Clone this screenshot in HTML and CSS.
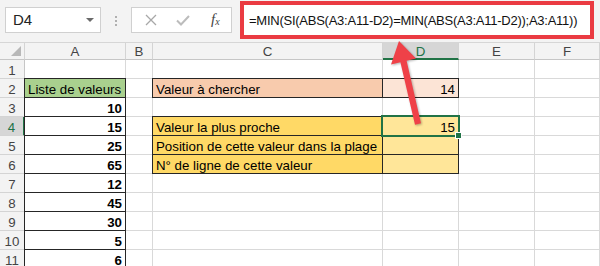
FILE: index.html
```html
<!DOCTYPE html>
<html lang="fr">
<head>
    <meta charset="UTF-8">
    <title>Valeur la plus proche</title>
    <link rel="stylesheet" href="styles.css">
</head>
<body>
    <div class="toolbar">
        <div class="namebox">
            <span>D4</span>
            <span class="caret"></span>
        </div>
        <div class="grip">
            <svg width="4" height="12" viewBox="0 0 4 12"><circle cx="2" cy="2" r="1" fill="#9a9a9a"/><circle cx="2" cy="6" r="1" fill="#9a9a9a"/><circle cx="2" cy="10" r="1" fill="#9a9a9a"/></svg>
        </div>
        <div class="btns">
            <svg class="icon" width="12" height="12" viewBox="0 0 12 12"><path d="M1 1 L11 11 M11 1 L1 11" stroke="#a8a8a8" stroke-width="1.3" fill="none"/></svg>
            <svg class="icon" width="14" height="12" viewBox="0 0 14 12"><path d="M1 6.5 L5 10.5 L13 2" stroke="#bcbcbc" stroke-width="2" fill="none"/></svg>
            <span class="fx">f<sub>x</sub></span>
        </div>
        <div class="formula">=MIN(SI(ABS(A3:A11-D2)=MIN(ABS(A3:A11-D2));A3:A11))</div>
    </div>

    <div class="sheet">
        <div class="hd corner"><span class="tri"></span></div>
        <div class="hd">A</div>
        <div class="hd">B</div>
        <div class="hd">C</div>
        <div class="hd active">D</div>
        <div class="hd">E</div>
        <div class="hd">F</div>

        <div class="rh">1</div>
        <div class="c"></div><div class="c"></div><div class="c"></div><div class="c"></div><div class="c"></div><div class="c"></div>

        <div class="rh">2</div>
        <div class="c box green">Liste de valeurs</div>
        <div class="c"></div>
        <div class="c box peach">Valeur à chercher</div>
        <div class="c box peach-light r">14</div>
        <div class="c"></div><div class="c"></div>

        <div class="rh">3</div>
        <div class="c box num">10</div>
        <div class="c"></div><div class="c"></div><div class="c"></div><div class="c"></div><div class="c"></div>

        <div class="rh active">4</div>
        <div class="c box num">15</div>
        <div class="c"></div>
        <div class="c box gold">Valeur la plus proche</div>
        <div class="c box gold-light r sel">15</div>
        <div class="c"></div><div class="c"></div>

        <div class="rh">5</div>
        <div class="c box num">25</div>
        <div class="c"></div>
        <div class="c box gold">Position de cette valeur dans la plage</div>
        <div class="c box gold-light"></div>
        <div class="c"></div><div class="c"></div>

        <div class="rh">6</div>
        <div class="c box num">65</div>
        <div class="c"></div>
        <div class="c box gold">N° de ligne de cette valeur</div>
        <div class="c box gold-light"></div>
        <div class="c"></div><div class="c"></div>

        <div class="rh">7</div>
        <div class="c box num">12</div>
        <div class="c"></div><div class="c"></div><div class="c"></div><div class="c"></div><div class="c"></div>

        <div class="rh">8</div>
        <div class="c box num">45</div>
        <div class="c"></div><div class="c"></div><div class="c"></div><div class="c"></div><div class="c"></div>

        <div class="rh">9</div>
        <div class="c box num">30</div>
        <div class="c"></div><div class="c"></div><div class="c"></div><div class="c"></div><div class="c"></div>

        <div class="rh">10</div>
        <div class="c box num">5</div>
        <div class="c"></div><div class="c"></div><div class="c"></div><div class="c"></div><div class="c"></div>

        <div class="rh">11</div>
        <div class="c box num">6</div>
        <div class="c"></div><div class="c"></div><div class="c"></div><div class="c"></div><div class="c"></div>
    </div>

    <!-- callout arrow pointing at the formula -->
    <svg class="arrow" width="600" height="266" viewBox="0 0 600 266">
        <polygon points="399,41 416,58.6 406.6,60.8 421,123.3 415,124.7 400.4,62.2 391,64.4" fill="#ef4148"/>
    </svg>
</body>
</html>
```

FILE: styles.css
```css
body {
    margin: 0;
    font-family: 'Liberation Sans', Arial, sans-serif;
    font-size: 13.3px;
    color: #000;
    background-color: #fff;
    overflow: hidden;
    position: relative;
}

.toolbar {
    display: flex;
    align-items: center;
    height: 43px;
    padding-bottom: 3px;
    box-sizing: border-box;
    background-color: #f3f3f3;
    border-bottom: 1px solid #d6d6d6;
}

.namebox {
    display: flex;
    align-items: center;
    justify-content: space-between;
    width: 96px;
    height: 26px;
    margin-left: 5px;
    padding: 0 6px 0 7px;
    box-sizing: border-box;
    background-color: #fff;
    border: 1px solid #d0d0d0;
    font-size: 15px;
    color: #222;
}

.caret {
    width: 0;
    height: 0;
    border-left: 4px solid transparent;
    border-right: 4px solid transparent;
    border-top: 4px solid #6a6a6a;
}

.grip {
    width: 30px;
    display: flex;
    justify-content: center;
    padding-top: 2px;
}

.btns {
    display: flex;
    align-items: center;
    width: 101px;
    height: 26px;
    box-sizing: border-box;
    background-color: #fff;
    border: 1px solid #d0d0d0;
    padding-left: 13px;
}

.btns .icon {
    margin-right: 19px;
}

.btns .icon + .icon {
    margin-right: 21px;
}

.fx {
    font-family: 'Liberation Serif', 'Times New Roman', serif;
    font-style: italic;
    font-size: 15px;
    color: #444;
}

.fx sub {
    font-size: 10px;
    vertical-align: -1px;
}

.formula {
    width: 354px;
    height: 38px;
    margin-left: 8px;
    margin-top: 1px;
    padding-left: 5px;
    box-sizing: border-box;
    background-color: #fff;
    border: 4px solid #ea3b42;
    line-height: 31px;
    font-size: 13px;
    letter-spacing: -0.25px;
    white-space: nowrap;
    color: #111;
}

.sheet {
    display: grid;
    grid-template-columns: 25px 101px 27px 230px 76px 76px 65px;
    grid-template-rows: 17px repeat(11, 19px);
}

.hd {
    background-color: #f3f3f3;
    border-right: 1px solid #d4d4d4;
    border-bottom: 1px solid #c6c6c6;
    text-align: center;
    line-height: 18px;
    color: #444;
    box-sizing: border-box;
}

.hd.active {
    background-color: #d6d6d6;
    color: #217346;
    border-bottom: 2px solid #217346;
}

.corner {
    position: relative;
}

.tri {
    position: absolute;
    right: 3px;
    bottom: 3px;
    width: 0;
    height: 0;
    border-left: 10px solid transparent;
    border-bottom: 10px solid #b8b8b8;
}

.rh {
    background-color: #f3f3f3;
    border-right: 1px solid #c6c6c6;
    border-bottom: 1px solid #d4d4d4;
    text-align: center;
    line-height: 21px;
    color: #444;
    box-sizing: border-box;
}

.rh.active {
    background-color: #d6d6d6;
    color: #217346;
    border-right: 2px solid #217346;
}

.c {
    border-right: 1px solid #d9d9d9;
    border-bottom: 1px solid #d9d9d9;
    box-sizing: border-box;
    padding: 1px 3px 0;
    line-height: 19px;
    white-space: nowrap;
    overflow: hidden;
}

.box {
    margin: -1px 0 0 -1px;
    border: 1px solid #262626;
}

.r {
    text-align: right;
}

.num {
    text-align: right;
    font-weight: bold;
}

.green {
    background-color: #a9d08e;
}

.peach {
    background-color: #f8cbad;
}

.peach-light {
    background-color: #fce4d6;
}

.gold {
    background-color: #ffd966;
}

.gold-light {
    background-color: #ffe699;
}

.sel {
    outline: 2px solid #217346;
    outline-offset: -1px;
    position: relative;
    overflow: visible;
}

.sel::after {
    content: '';
    position: absolute;
    right: -4px;
    bottom: -4px;
    width: 5px;
    height: 5px;
    background-color: #217346;
    border: 1px solid #fff;
}

.arrow {
    position: absolute;
    left: 0;
    top: 0;
    pointer-events: none;
    filter: drop-shadow(1px 1px 1px rgba(0, 0, 0, 0.3));
}
```
